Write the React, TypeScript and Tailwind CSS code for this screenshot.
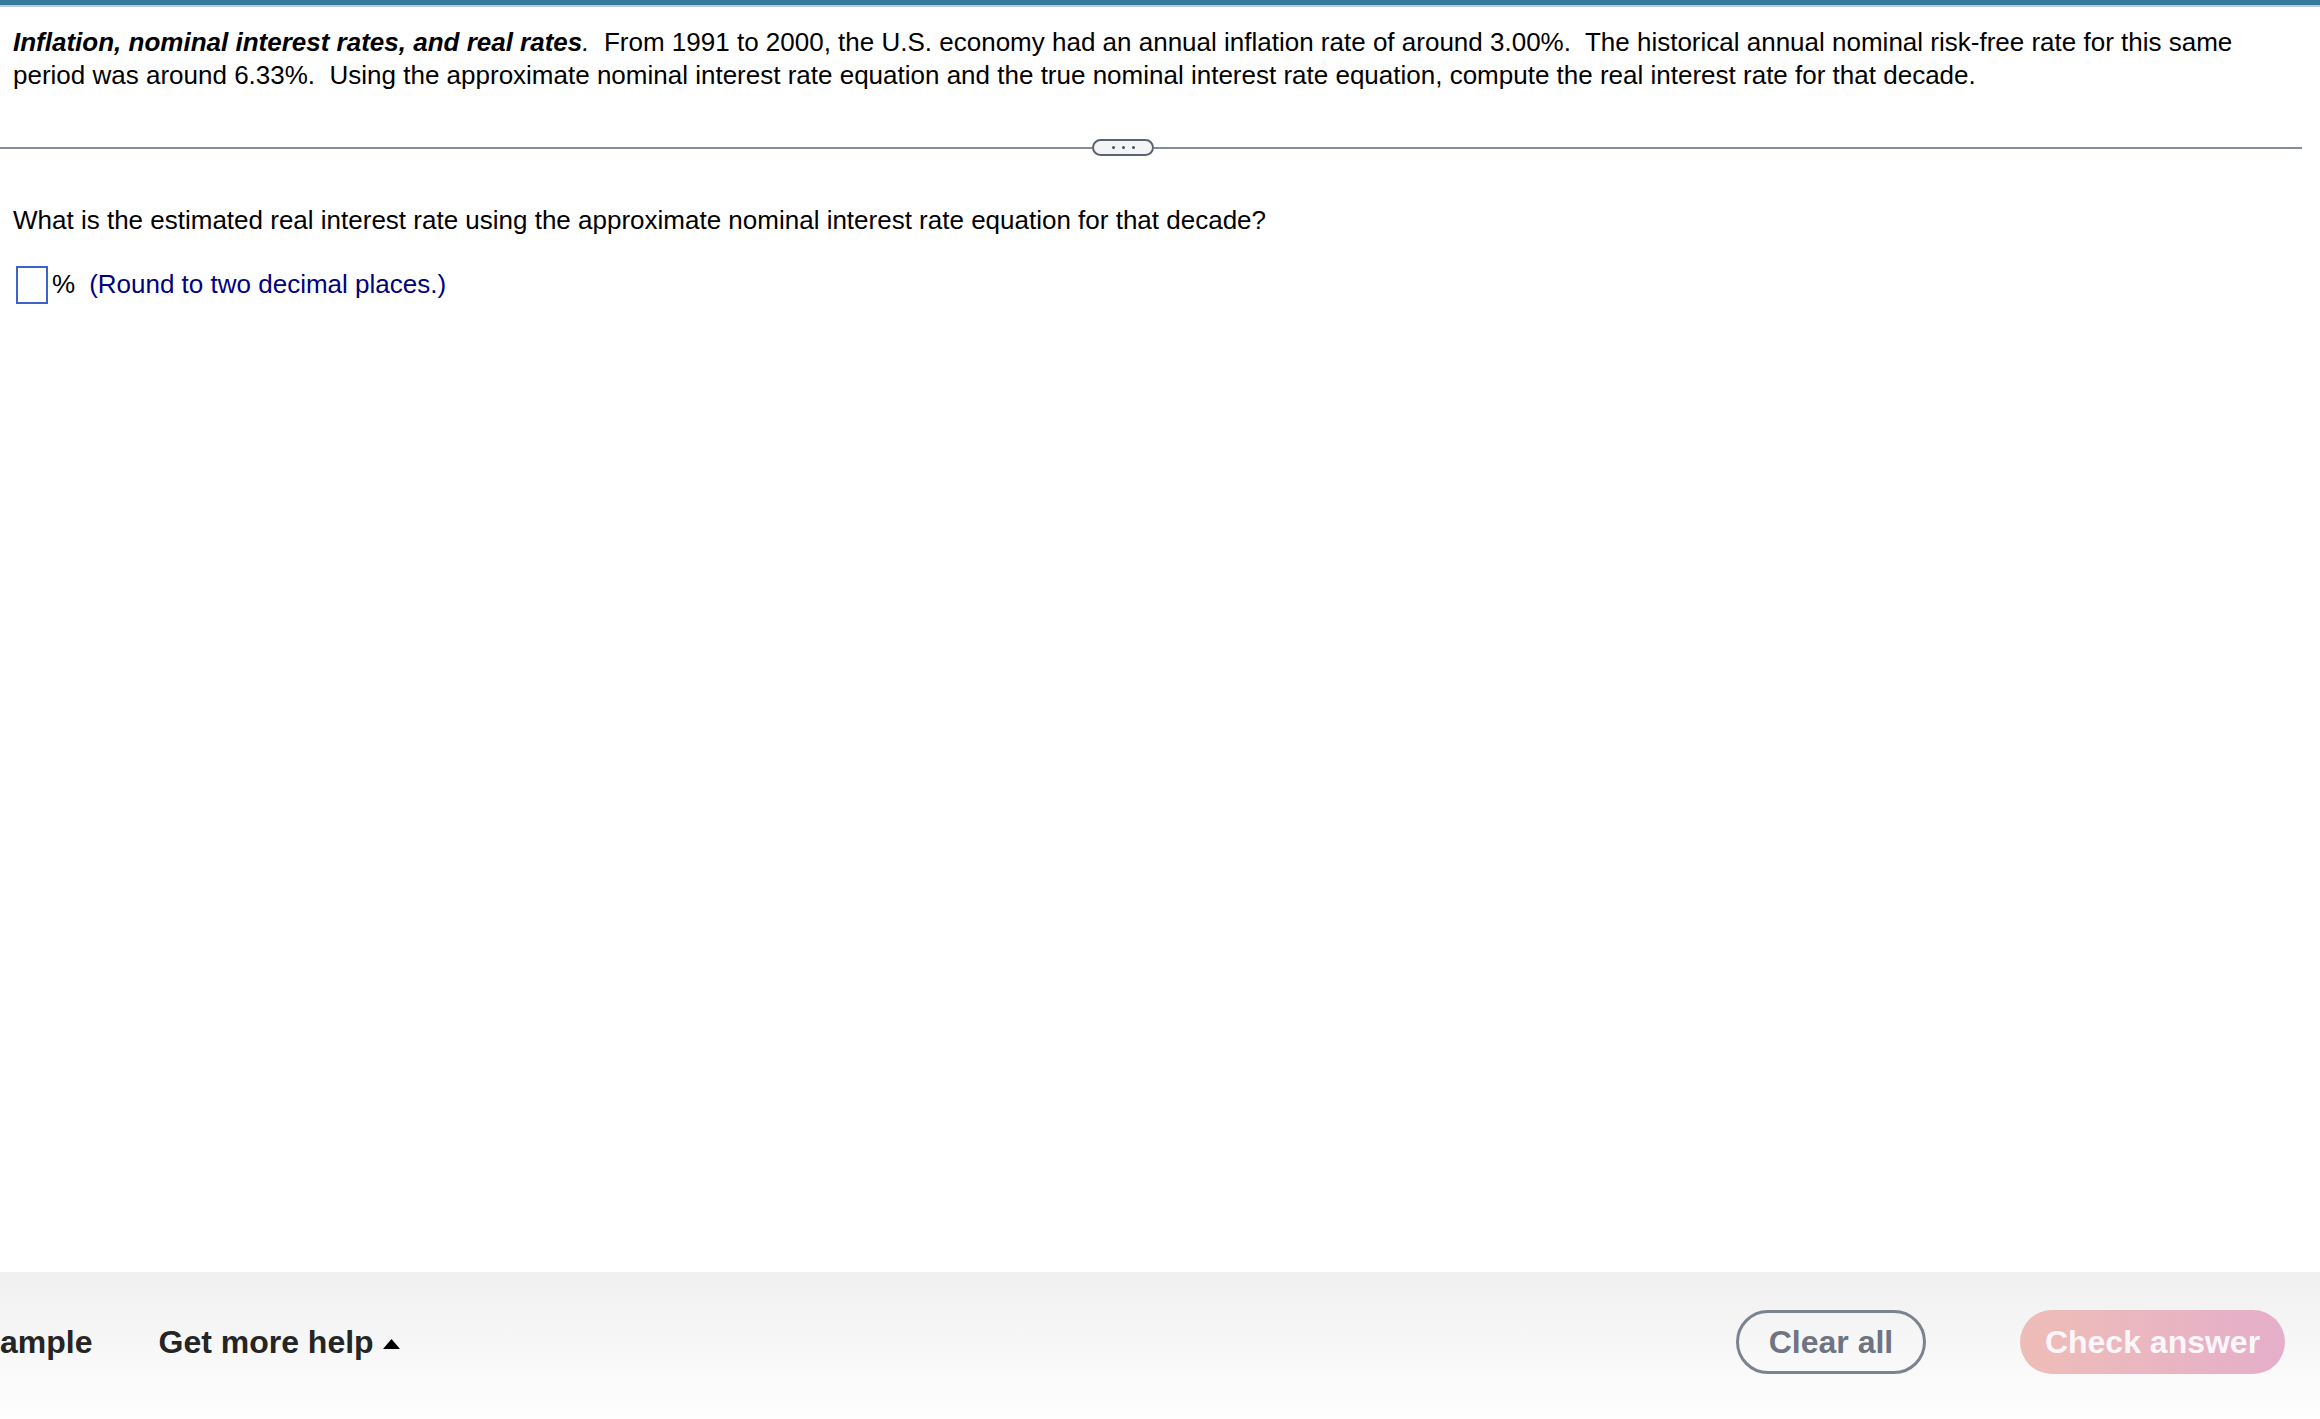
import React from "react";

export default function App() {
  return (
    <div
      className="flex min-h-screen w-full flex-col bg-white text-black"
      style={{ fontFamily: '"Liberation Sans", Arial, Helvetica, sans-serif' }}
    >
      <div className="h-[5px] w-full bg-[#36799b]" />
      <div className="h-[2px] w-full bg-[#b4cbd9]" />

      <main className="flex w-[2302px] flex-1 flex-col">
        <div className="w-[2275px] pl-[13px] pt-[19px] text-[26px] leading-[32.5px]">
          <span className="font-bold italic">Inflation, nominal interest rates, and real rates</span>
          <span className="italic">.</span>
          {"\u00a0 From 1991 to 2000, the U.S. economy had an annual inflation rate of around 3.00%.\u00a0 The historical annual nominal risk-free rate for this same period was around 6.33%.\u00a0 Using the approximate nominal interest rate equation and the true nominal interest rate equation, compute the real interest rate for that decade."}
        </div>

        <div className="mt-[48px] flex h-[17px] items-center">
          <div className="h-[2px] w-[1092px] bg-[#858c99]" />
          <div className="flex h-[17px] w-[62px] items-center justify-center gap-[7px] rounded-full border-2 border-[#5b6270] bg-[#f3f4f6]">
            <span className="h-[3px] w-[3px] rounded-full bg-[#4b505a]" />
            <span className="h-[3px] w-[3px] rounded-full bg-[#4b505a]" />
            <span className="h-[3px] w-[3px] rounded-full bg-[#4b505a]" />
          </div>
          <div className="h-[2px] flex-1 bg-[#858c99]" />
        </div>

        <div className="pl-[13px] pt-[48px] text-[26px] leading-[32.5px]">
          What is the estimated real interest rate using the approximate nominal interest rate equation for that decade?
        </div>

        <div className="mt-[29px] flex items-center pl-[16px] text-[26px] leading-[32.5px]">
          <div className="h-[38px] w-[32px] border-2 border-[#3b64c8] bg-white" />
          <span className="ml-[4px]">%</span>
          <span className="ml-[14px] text-[#000080]">(Round to two decimal places.)</span>
        </div>
      </main>

      <footer className="flex h-[147px] w-full items-center bg-linear-to-b from-[#f0f0f0] to-[#fefefe] pb-[8px] text-[32px] font-bold text-[#252525]">
        <span>ample</span>
        <span className="ml-[66px] flex items-center">
          Get more help
          <svg className="ml-[9px] mt-[4px]" width="17" height="10" viewBox="0 0 17 10">
            <polygon points="8.5,0 17,10 0,10" fill="#000" />
          </svg>
        </span>
        <div className="flex-1" />
        <button className="flex h-[64px] w-[190px] items-center justify-center rounded-full border-[3px] border-[#7d8290] bg-transparent text-[32px] font-bold text-[#6f7482]">
          Clear all
        </button>
        <button className="ml-[94px] mr-[35px] flex h-[64px] w-[265px] items-center justify-center rounded-full bg-linear-to-r from-[#efbdb7] to-[#e5aeca] text-[32px] font-bold text-[#fdf7fa]">
          Check answer
        </button>
      </footer>
    </div>
  );
}
